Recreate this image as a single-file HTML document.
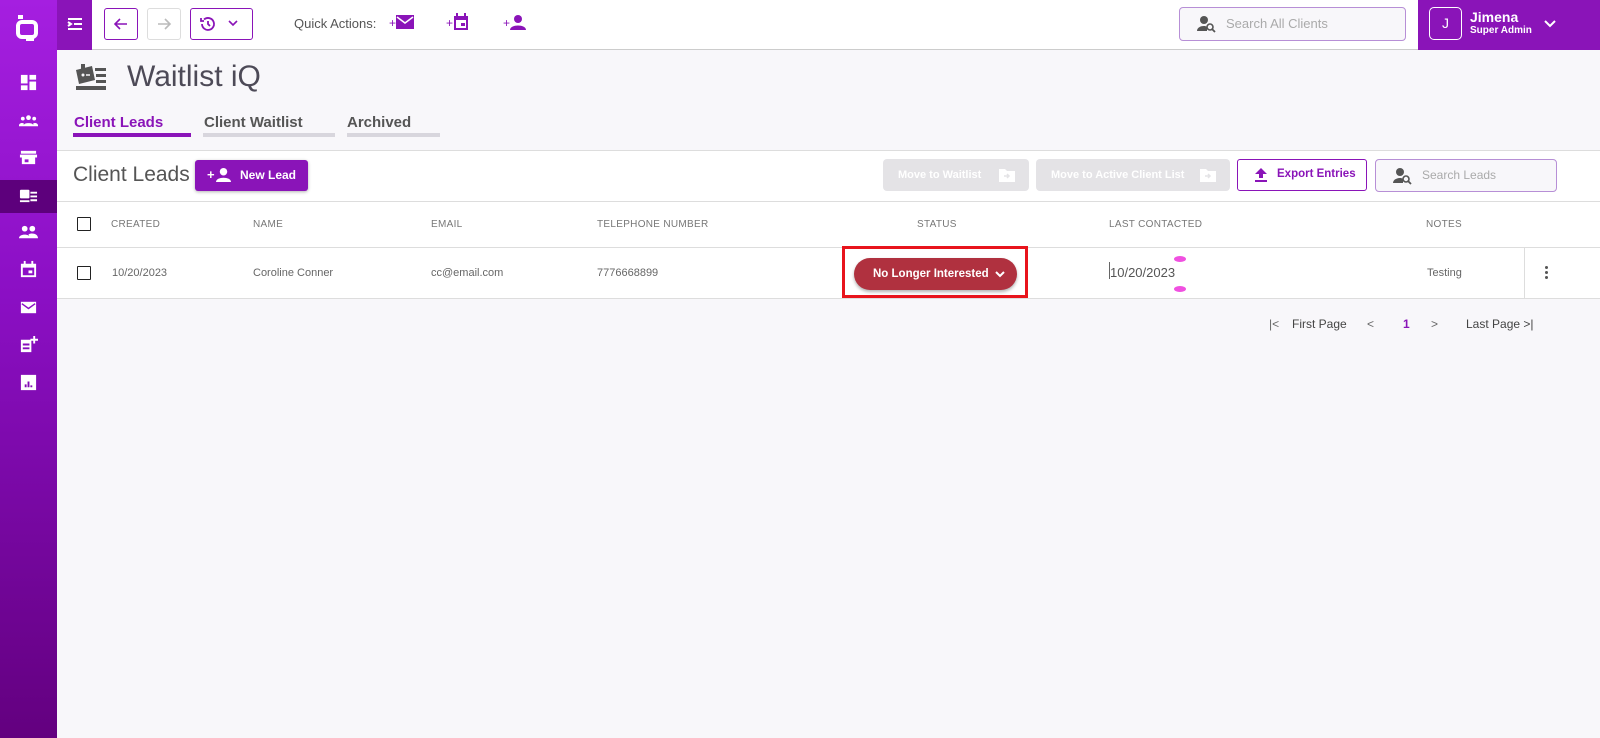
<!DOCTYPE html>
<html><head><meta charset="utf-8"><style>
*{box-sizing:border-box;margin:0;padding:0}
body{width:1600px;height:738px;overflow:hidden;background:#f8f7fa;font-family:"Liberation Sans",sans-serif;position:relative;color:#555}
.abs{position:absolute}
#side{left:0;top:0;width:57px;height:738px;background:linear-gradient(#a51fe0,#8b0fc4 40%,#63007f)}
.si{position:absolute;left:19px;width:19px;height:19px}
#top{left:57px;top:0;width:1543px;height:50px;background:#fff;border-bottom:1px solid #ccc}
.btn{position:absolute;border:1.5px solid #8a14b8;border-radius:3px;background:#fff}
.tab{position:absolute;top:114px;font-size:15px;font-weight:bold;color:#555}
.bar{position:absolute;top:133px;height:4px;background:#d8d6dd}
.hd{position:absolute;top:219px;font-size:10px;color:#777;letter-spacing:.3px}
.cell{position:absolute;top:267px;font-size:11px;color:#666}
.cb{position:absolute;left:77px;width:14px;height:14px;border:1.5px solid #222;border-radius:1px}
.gbtn{position:absolute;top:159px;height:32px;background:#e4e3e6;border-radius:4px;color:#fff;font-size:11px;font-weight:bold;line-height:32px;padding-left:15px}
</style></head><body>
<div id="side" class="abs">
 <svg class="abs" style="left:15px;top:14px" width="26" height="28" viewBox="0 0 26 28"><rect x="3" y="8" width="18" height="15" rx="4" fill="none" stroke="#fff" stroke-width="4"/><rect x="3" y="1" width="5" height="4" fill="#fff"/><rect x="11" y="23" width="8" height="4" fill="#fff"/></svg>
 <svg class="si" style="top:73px" viewBox="0 0 20 20" fill="#fff"><rect x="2" y="2" width="7" height="9"/><rect x="11" y="2" width="7" height="5"/><rect x="2" y="13" width="7" height="5"/><rect x="11" y="9" width="7" height="9"/></svg>
 <svg class="si" style="top:111px" viewBox="0 0 20 20" fill="#fff"><circle cx="10" cy="7" r="2.5"/><circle cx="4" cy="8" r="2"/><circle cx="16" cy="8" r="2"/><path d="M5 15c0-3 10-3 10 0v1H5zM0 15c0-2 3-3 5-2v3H0zM15 13c2-1 5 0 5 2v1h-5z"/></svg>
 <svg class="si" style="top:148px" viewBox="0 0 20 20" fill="#fff"><rect x="2" y="3" width="16" height="3"/><path d="M1 7h18v3H1z"/><path d="M3 10h14v7H3zM6 12v3h4v-3z" fill-rule="evenodd"/></svg>
 <div class="abs" style="left:0;top:180px;width:57px;height:33px;background:#5d007c"></div>
 <svg class="si" style="top:186px" viewBox="0 0 20 20" fill="#fff"><rect x="1" y="4" width="10" height="9" rx="1"/><path d="M12 6h7v2h-7zM12 10h7v2h-7zM12 14h7v2h-7zM1 15h10v2H1z"/></svg>
 <svg class="si" style="top:223px" viewBox="0 0 20 20" fill="#fff"><circle cx="6" cy="6" r="3"/><circle cx="14" cy="6" r="3"/><path d="M0 16c0-5 12-5 12 0zM10 12c3-2 10-1 10 4h-8z"/></svg>
 <svg class="si" style="top:260px" viewBox="0 0 20 20" fill="#fff"><path d="M2 4h16v14H2zM4 8v8h12V8z" fill-rule="evenodd"/><rect x="5" y="1" width="2" height="4"/><rect x="13" y="1" width="2" height="4"/><rect x="10" y="11" width="4" height="3"/></svg>
 <svg class="si" style="top:298px" viewBox="0 0 20 20" fill="#fff"><path d="M2 4h16v12H2z"/><path d="M3 6l7 5 7-5" stroke="#8b0fc4" stroke-width="1.5" fill="none"/></svg>
 <svg class="si" style="top:335px" viewBox="0 0 20 20" fill="#fff"><path d="M2 5h11v13H2zM4 9v2h7V9zM4 13v2h7v-2z" fill-rule="evenodd"/><path d="M15 1h2v3h3v2h-3v3h-2V6h-3V4h3z"/></svg>
 <svg class="si" style="top:373px" viewBox="0 0 20 20" fill="#fff"><path d="M2 2h16v16H2zM6 12v3h2v-3zM9 9v6h2V9zM12 13v2h2v-2z" fill-rule="evenodd"/></svg>
</div>
<div id="top" class="abs"></div>
<div class="abs" style="left:57px;top:0;width:35px;height:50px;background:#8a14b8"></div>
<svg class="abs" style="left:67px;top:17px" width="16" height="14" viewBox="0 0 16 14" stroke="#fff" stroke-width="2"><path d="M1 2h14M7 7h8M1 12h14M1 5l3 2-3 2" fill="none"/></svg>
<div class="btn" style="left:104px;top:8px;width:34px;height:32px"></div>
<svg class="abs" style="left:113px;top:16px" width="16" height="16" viewBox="0 0 16 16" stroke="#8a14b8" stroke-width="1.6" fill="none"><path d="M14 8H2M7 3L2 8l5 5"/></svg>
<div class="btn" style="left:147px;top:8px;width:34px;height:32px;border-color:#ddd"></div>
<svg class="abs" style="left:156px;top:16px" width="16" height="16" viewBox="0 0 16 16" stroke="#bbb" stroke-width="1.6" fill="none"><path d="M2 8h12M9 3l5 5-5 5"/></svg>
<div class="btn" style="left:190px;top:8px;width:63px;height:32px"></div>
<svg class="abs" style="left:199px;top:15px" width="18" height="18" viewBox="0 0 18 18" stroke="#8a14b8" stroke-width="1.8" fill="none"><path d="M3 9a6 6 0 1 0 2-4.5M2 3v3h3M9 6v3l2 2"/></svg>
<svg class="abs" style="left:228px;top:19px" width="10" height="8" viewBox="0 0 10 8" stroke="#8a14b8" stroke-width="1.6" fill="none"><path d="M1 2l4 4 4-4"/></svg>
<div class="abs" style="left:294px;top:16px;font-size:13px;color:#555">Quick Actions:</div>
<div class="abs" style="left:389px;top:16px;font-size:12px;color:#8a14b8">+</div>
<svg class="abs" style="left:396px;top:15px" width="18" height="14" viewBox="0 0 18 14"><path d="M0 0h18v14H0z" fill="#8a14b8"/><path d="M1 2l8 6 8-6" stroke="#fff" stroke-width="1.5" fill="none"/></svg>
<div class="abs" style="left:446px;top:16px;font-size:12px;color:#8a14b8">+</div>
<svg class="abs" style="left:453px;top:13px" width="16" height="18" viewBox="0 0 16 18" fill="#8a14b8"><path d="M1 3h14v14H1zM3 7v8h10V7z" fill-rule="evenodd"/><rect x="3" y="0" width="2" height="4"/><rect x="11" y="0" width="2" height="4"/><rect x="8" y="10" width="4" height="3"/></svg>
<div class="abs" style="left:503px;top:16px;font-size:12px;color:#8a14b8">+</div>
<svg class="abs" style="left:510px;top:14px" width="16" height="16" viewBox="0 0 16 16" fill="#8a14b8"><circle cx="8" cy="5" r="4"/><path d="M0 16c0-6 16-6 16 0z"/></svg>
<div class="abs" style="left:1179px;top:7px;width:227px;height:34px;border:1px solid #b78fd6;border-radius:4px;background:#f8f7fa"></div>
<svg class="abs" style="left:1197px;top:15px" width="20" height="18" viewBox="0 0 20 18" fill="#555"><circle cx="7" cy="5" r="4"/><path d="M0 16c0-5 8-6 10-4v4z"/><circle cx="13" cy="12" r="3" fill="none" stroke="#555" stroke-width="1.6"/><path d="M15 14l3 3" stroke="#555" stroke-width="1.8"/></svg>
<div class="abs" style="left:1226px;top:16px;font-size:13px;color:#aaa">Search All Clients</div>
<div class="abs" style="left:1418px;top:0;width:182px;height:50px;background:#8a14b8"></div>
<div class="abs" style="left:1429px;top:7px;width:33px;height:33px;border:1.5px solid #fff;border-radius:5px;color:#fff;font-size:14px;line-height:30px;text-align:center">J</div>
<div class="abs" style="left:1470px;top:9px;font-size:14px;font-weight:bold;color:#fff">Jimena</div>
<div class="abs" style="left:1470px;top:25px;font-size:10px;font-weight:bold;color:#fff">Super Admin</div>
<svg class="abs" style="left:1544px;top:19px" width="12" height="9" viewBox="0 0 12 9" stroke="#fff" stroke-width="2" fill="none"><path d="M1 2l5 5 5-5"/></svg>

<svg class="abs" style="left:74px;top:62px" width="34" height="30" viewBox="0 0 34 30" fill="#555"><path d="M2 8l16-4 3 14-16 4z"/><rect x="7" y="2" width="4" height="5"/><path d="M21 6h11v3H21zM22 12h10v3H22zM22 18h10v3H22zM2 24h30v4H2z"/><circle cx="9" cy="13" r="1.5" fill="#f8f7fa"/><path d="M12 13h4" stroke="#f8f7fa" stroke-width="1.5"/></svg>
<div class="abs" style="left:127px;top:60px;font-size:30px;color:#4d4a57">Waitlist iQ</div>
<div class="tab" style="left:74px;color:#8a14b8">Client Leads</div>
<div class="bar" style="left:73px;width:118px;background:#8a14b8"></div>
<div class="tab" style="left:204px">Client Waitlist</div>
<div class="bar" style="left:203px;width:132px"></div>
<div class="tab" style="left:347px">Archived</div>
<div class="bar" style="left:347px;width:93px"></div>

<div class="abs" style="left:57px;top:150px;width:1543px;height:149px;background:#fff;border-top:1px solid #ddd;border-bottom:1px solid #ddd"></div>
<div class="abs" style="left:57px;top:201px;width:1543px;height:1px;background:#ddd"></div>
<div class="abs" style="left:57px;top:247px;width:1543px;height:1px;background:#ddd"></div>
<div class="abs" style="left:73px;top:163px;font-size:21px;color:#555">Client Leads</div>
<div class="abs" style="left:195px;top:160px;width:113px;height:31px;background:#8a14b8;border-radius:3px;box-shadow:0 1px 3px rgba(0,0,0,.3)"></div>
<div class="abs" style="left:207px;top:167px;font-size:13px;color:#fff;font-weight:bold">+</div>
<svg class="abs" style="left:216px;top:167px" width="15" height="15" viewBox="0 0 16 16" fill="#fff"><circle cx="8" cy="5" r="4"/><path d="M0 16c0-6 16-6 16 0z"/></svg>
<div class="abs" style="left:240px;top:168px;font-size:12px;color:#fff;font-weight:bold">New Lead</div>
<div class="gbtn" style="left:883px;width:146px">Move to Waitlist</div>
<div class="gbtn" style="left:1036px;width:194px">Move to Active Client List</div>
<svg class="abs" style="left:999px;top:169px" width="16" height="13" viewBox="0 0 16 13" fill="#fff"><path d="M0 0h6l2 2h8v11H0z"/><path d="M5 7h5M8 5l2 2-2 2" stroke="#e4e3e6" stroke-width="1.5" fill="none"/></svg>
<svg class="abs" style="left:1200px;top:169px" width="16" height="13" viewBox="0 0 16 13" fill="#fff"><path d="M0 0h6l2 2h8v11H0z"/><path d="M5 7h5M8 5l2 2-2 2" stroke="#e4e3e6" stroke-width="1.5" fill="none"/></svg>
<div class="btn" style="left:1237px;top:159px;width:130px;height:32px"></div>
<svg class="abs" style="left:1255px;top:168px" width="12" height="14" viewBox="0 0 12 14" fill="#8a14b8"><path d="M6 0l6 6H8v4H4V6H0z"/><rect x="0" y="12" width="12" height="2"/></svg>
<div class="abs" style="left:1277px;top:168px;font-size:11.5px;color:#8a14b8;font-weight:bold">Export Entries</div>
<div class="abs" style="left:1375px;top:159px;width:182px;height:33px;border:1px solid #b78fd6;border-radius:4px;background:#f8f7fa"></div>
<svg class="abs" style="left:1393px;top:167px" width="20" height="18" viewBox="0 0 20 18" fill="#555"><circle cx="7" cy="5" r="4"/><path d="M0 16c0-5 8-6 10-4v4z"/><circle cx="13" cy="12" r="3" fill="none" stroke="#555" stroke-width="1.6"/><path d="M15 14l3 3" stroke="#555" stroke-width="1.8"/></svg>
<div class="abs" style="left:1422px;top:168px;font-size:12px;color:#aaa">Search Leads</div>

<div class="cb" style="top:217px"></div>
<div class="hd" style="left:111px">CREATED</div>
<div class="hd" style="left:253px">NAME</div>
<div class="hd" style="left:431px">EMAIL</div>
<div class="hd" style="left:597px">TELEPHONE NUMBER</div>
<div class="hd" style="left:917px">STATUS</div>
<div class="hd" style="left:1109px">LAST CONTACTED</div>
<div class="hd" style="left:1426px">NOTES</div>
<div class="cb" style="top:266px"></div>
<div class="cell" style="left:112px">10/20/2023</div>
<div class="cell" style="left:253px">Coroline Conner</div>
<div class="cell" style="left:431px">cc@email.com</div>
<div class="cell" style="left:597px">7776668899</div>
<div class="abs" style="left:842px;top:246px;width:186px;height:52px;border:3px solid #e8141c"></div>
<div class="abs" style="left:854px;top:258px;width:163px;height:32px;background:#b0313f;border-radius:16px;box-shadow:0 2px 3px rgba(0,0,0,.3);color:#fff;font-size:11.5px;font-weight:bold;line-height:32px;padding-left:19px">No Longer Interested</div>
<svg class="abs" style="left:995px;top:270px" width="10" height="8" viewBox="0 0 10 8" stroke="#fff" stroke-width="2" fill="none"><path d="M1 2l4 4 4-4"/></svg>
<div class="abs" style="left:1109px;top:262px;width:1px;height:17px;background:#666"></div>
<div class="abs" style="left:1110px;top:265px;font-size:13px;color:#555">10/20/2023</div>
<div class="abs" style="left:1174px;top:256px;width:12px;height:6px;background:#f050e0;border-radius:50%"></div>
<div class="abs" style="left:1174px;top:286px;width:12px;height:6px;background:#f050e0;border-radius:50%"></div>
<div class="cell" style="left:1427px">Testing</div>
<div class="abs" style="left:1524px;top:248px;width:1px;height:50px;background:#ddd"></div>
<div class="abs" style="left:1545px;top:266px;width:3px;height:3px;background:#555;border-radius:50%;box-shadow:0 5px 0 #555,0 10px 0 #555"></div>

<div class="abs" style="left:1269px;top:317px;font-size:12px;color:#666">|&lt;</div>
<div class="abs" style="left:1292px;top:317px;font-size:12px;color:#444">First Page</div>
<div class="abs" style="left:1367px;top:317px;font-size:12px;color:#666">&lt;</div>
<div class="abs" style="left:1403px;top:317px;font-size:12px;color:#8a14b8;font-weight:bold">1</div>
<div class="abs" style="left:1431px;top:317px;font-size:12px;color:#666">&gt;</div>
<div class="abs" style="left:1466px;top:317px;font-size:12px;color:#444">Last Page &gt;|</div>
</body></html>
